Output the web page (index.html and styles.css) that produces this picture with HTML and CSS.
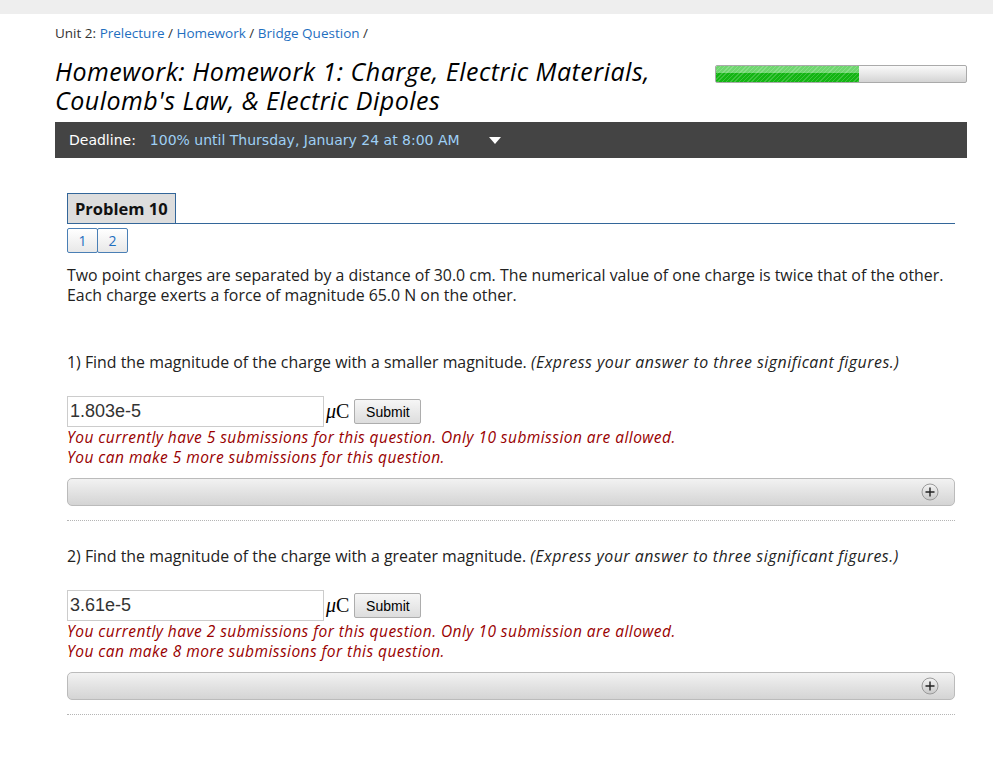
FILE: index.html
```html
<!DOCTYPE html>
<html>
<head>
<meta charset="utf-8">
<link rel="stylesheet" href="styles.css">
</head>
<body>
<div class="topband"></div>
<div class="page">
  <div class="crumbs">Unit 2: <a href="#">Prelecture</a> / <a href="#">Homework</a> / <a href="#">Bridge Question</a> /</div>
  <div class="header">
    <h1 class="title">Homework: Homework 1: Charge, Electric Materials, Coulomb's Law, &amp; Electric Dipoles</h1>
    <div class="progress"><div class="progress-fill" style="width:57%"></div></div>
  </div>
  <div class="deadline">
    <span class="dl-label">Deadline:</span>
    <span class="dl-value">100% until Thursday, January 24 at 8:00 AM</span>
    <span class="dl-caret"></span>
  </div>
  <div class="problem">
    <div class="tabs"><div class="tab">Problem 10</div></div>
    <div class="pager"><a class="pg" href="#">1</a><a class="pg" href="#">2</a></div>
    <p class="statement">Two point charges are separated by a distance of 30.0 cm. The numerical value of one charge is twice that of the other. Each charge exerts a force of magnitude 65.0 N on the other.</p>

    <div class="question">
      <p class="qtext">1) Find the magnitude of the charge with a smaller magnitude. <em>(Express your answer to three significant figures.)</em></p>
      <div class="answer">
        <input class="ans-input" type="text" value="1.803e-5">
        <span class="unit"><i>μ</i>C</span>
        <button class="submit">Submit</button>
      </div>
      <div class="note">
        <div class="note-line">You currently have 5 submissions for this question. Only 10 submission are allowed.</div>
        <div class="note-line">You can make 5 more submissions for this question.</div>
      </div>
      <div class="collapser">
        <svg class="plus" width="18" height="18" viewBox="0 0 18 18"><defs><linearGradient id="g1" x1="0" y1="0" x2="0" y2="1"><stop offset="0" stop-color="#f4f4f4"/><stop offset="1" stop-color="#c8c8c8"/></linearGradient></defs><circle cx="9" cy="9" r="8" fill="url(#g1)" stroke="#9a9a9a" stroke-width="1"/><path d="M9 4.5V13.5M4.5 9H13.5" stroke="#222" stroke-width="1.4"/></svg>
      </div>
    </div>

    <div class="question">
      <p class="qtext">2) Find the magnitude of the charge with a greater magnitude. <em>(Express your answer to three significant figures.)</em></p>
      <div class="answer">
        <input class="ans-input" type="text" value="3.61e-5">
        <span class="unit"><i>μ</i>C</span>
        <button class="submit">Submit</button>
      </div>
      <div class="note">
        <div class="note-line">You currently have 2 submissions for this question. Only 10 submission are allowed.</div>
        <div class="note-line">You can make 8 more submissions for this question.</div>
      </div>
      <div class="collapser">
        <svg class="plus" width="18" height="18" viewBox="0 0 18 18"><defs><linearGradient id="g2" x1="0" y1="0" x2="0" y2="1"><stop offset="0" stop-color="#f4f4f4"/><stop offset="1" stop-color="#c8c8c8"/></linearGradient></defs><circle cx="9" cy="9" r="8" fill="url(#g2)" stroke="#9a9a9a" stroke-width="1"/><path d="M9 4.5V13.5M4.5 9H13.5" stroke="#222" stroke-width="1.4"/></svg>
      </div>
    </div>
  </div>
</div>
</body>
</html>
```
FILE: styles.css
```css
html, body {
  margin: 0;
  padding: 0;
  background: #fff;
}
body {
  font-family: "Open Sans", "DejaVu Sans", sans-serif;
  color: #222;
}
.topband {
  height: 14px;
  background: #eeeeee;
}
.page {
  width: 912px;
  margin-left: 55px;
}
.crumbs {
  font-size: 13.5px;
  line-height: 20px;
  padding-top: 9px;
  color: #333;
}
.crumbs a {
  color: #1f6fbf;
  text-decoration: none;
}
.header {
  display: flex;
  justify-content: space-between;
  align-items: flex-start;
  margin-top: 14px;
}
.title {
  margin: 0;
  font-size: 25px;
  line-height: 29px;
  letter-spacing: 0.5px;
  font-weight: normal;
  font-style: italic;
  color: #000;
  width: 650px;
}
.progress {
  width: 250px;
  height: 16px;
  margin-top: 8px;
  border: 1px solid #aaa;
  border-radius: 2px;
  background: linear-gradient(#fafafa, #e4e4e4 60%, #d4d4d4);
  overflow: hidden;
}
.progress-fill {
  height: 100%;
  background:
    repeating-linear-gradient(135deg, rgba(255,255,255,0.18) 0 1px, transparent 1px 3px),
    linear-gradient(#6fd66f 0 45%, #13b513 45% 100%);
}
.deadline {
  margin-top: 7px;
  height: 36px;
  background: #444;
  display: flex;
  align-items: center;
  padding-left: 14px;
  font-family: "DejaVu Sans", sans-serif;
  font-size: 14px;
}
.dl-label {
  color: #fff;
}
.dl-value {
  color: #9fd0f5;
  margin-left: 14px;
}
.dl-caret {
  margin-left: 29px;
  width: 0;
  height: 0;
  border-left: 6px solid transparent;
  border-right: 6px solid transparent;
  border-top: 7px solid #fff;
}
.problem {
  padding: 0 12px;
}
.tabs {
  margin-top: 35px;
  border-bottom: 1px solid #336699;
  display: flex;
}
.tab {
  border: 1px solid #336699;
  border-bottom: none;
  background: #dddddd;
  font-weight: bold;
  font-size: 16.5px;
  line-height: 29px;
  padding: 0 7px;
  color: #111;
}
.pager {
  display: flex;
  margin-top: 4px;
}
.pg {
  display: block;
  box-sizing: border-box;
  width: 31px;
  height: 25px;
  line-height: 23px;
  text-align: center;
  border: 1px solid #4a7fb5;
  margin-right: -1px;
  border-radius: 2px;
  background: linear-gradient(#ffffff, #e8e8e8);
  color: #1f6fbf;
  text-decoration: none;
  font-size: 14px;
}
.statement {
  margin: 12px 0 0;
  font-size: 15.9px;
  line-height: 20px;
  color: #222;
}
.question {
  border-bottom: 1px dotted #b5b5b5;
  padding-bottom: 14px;
}
.qtext {
  margin: 47px 0 0;
  font-size: 15.9px;
  line-height: 20px;
  color: #222;
}
.qtext em {
  letter-spacing: 0.5px;
}
.question + .question .qtext {
  margin-top: 25px;
}
.answer {
  display: flex;
  align-items: center;
  margin-top: 24px;
}
.ans-input {
  width: 257px;
  height: 31px;
  box-sizing: border-box;
  border: 1px solid #ccc;
  padding: 0 2px;
  font-family: "Liberation Sans", Arial, sans-serif;
  font-size: 18px;
  color: #333;
  margin: 0;
}
.unit {
  font-family: "Liberation Serif", "DejaVu Serif", serif;
  font-size: 20px;
  margin-left: 2px;
  margin-right: 5px;
  color: #000;
}
.submit {
  font-family: "Liberation Sans", Arial, sans-serif;
  font-size: 14px;
  height: 25px;
  width: 67px;
  padding: 0;
  border: 1px solid #adadad;
  border-radius: 2px;
  background: linear-gradient(#f6f6f6, #dddddd);
  color: #000;
}
.note {
  font-style: italic;
  color: #990000;
  font-size: 15.5px;
  letter-spacing: 0.45px;
  line-height: 20px;
  margin-top: 0;
}
.collapser {
  margin-top: 11px;
  height: 28px;
  box-sizing: border-box;
  border: 1px solid #bbb;
  border-radius: 5px;
  background: linear-gradient(#f2f2f2, #d4d4d4);
  display: flex;
  align-items: center;
  justify-content: flex-end;
  padding-right: 15px;
}
.plus {
  display: block;
}
```
